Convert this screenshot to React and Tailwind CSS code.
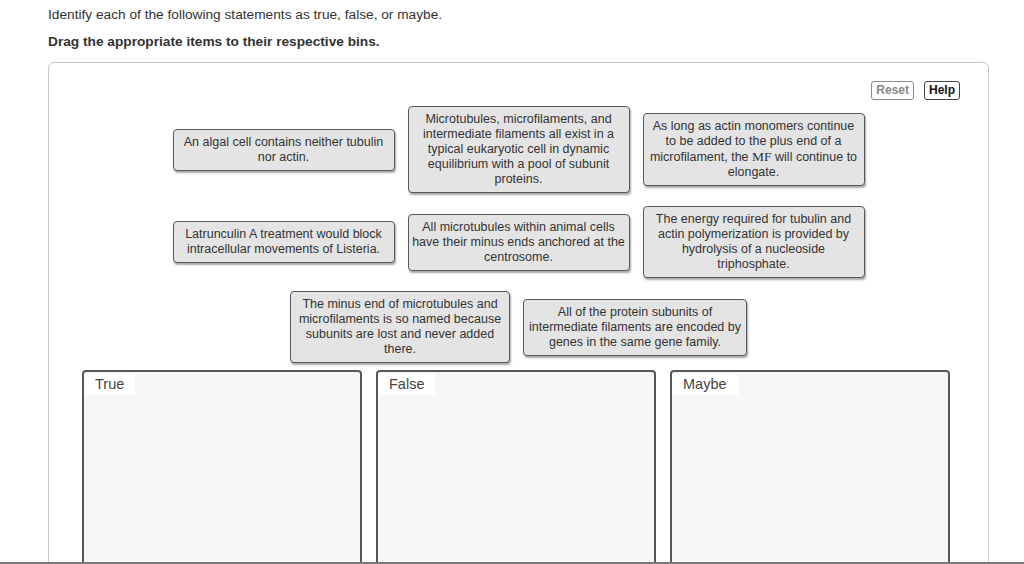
import React from "react";

const rows = [
  [
    { w: "w-[222px]", text: "An algal cell contains neither tubulin nor actin." },
    {
      w: "w-[222px]",
      text: "Microtubules, microfilaments, and intermediate filaments all exist in a typical eukaryotic cell in dynamic equilibrium with a pool of subunit proteins.",
    },
    {
      w: "w-[222px]",
      text: (
        <>
          As long as actin monomers continue to be added to the plus end of a
          microfilament, the{" "}
          <span className="font-['Liberation_Serif',serif] text-[13.5px]">MF</span>{" "}
          will continue to elongate.
        </>
      ),
    },
  ],
  [
    {
      w: "w-[222px]",
      text: "Latrunculin A treatment would block intracellular movements of Listeria.",
    },
    {
      w: "w-[222px]",
      text: "All microtubules within animal cells have their minus ends anchored at the centrosome.",
    },
    {
      w: "w-[222px]",
      text: "The energy required for tubulin and actin polymerization is provided by hydrolysis of a nucleoside triphosphate.",
    },
  ],
  [
    {
      w: "w-[220px]",
      text: "The minus end of microtubules and microfilaments is so named because subunits are lost and never added there.",
    },
    {
      w: "w-[224px]",
      text: "All of the protein subunits of intermediate filaments are encoded by genes in the same gene family.",
    },
  ],
];

const bins = ["True", "False", "Maybe"];

function Card({ w, text }) {
  return (
    <div
      className={`${w} rounded-[4px] border border-[#555a60] bg-[#e4e4e4] px-[3px] py-[5px] text-center text-[12.5px] leading-[15px] text-[#333] shadow-[1px_2px_2px_rgba(0,0,0,0.35)]`}
    >
      {text}
    </div>
  );
}

export default function App() {
  return (
    <div className="relative h-[564px] overflow-hidden bg-white font-['Liberation_Sans',Arial,sans-serif] text-[#333]">
      <div className="h-[562px] overflow-hidden px-[48px] pt-[6px]">
        <p className="text-[13.7px] leading-[18px]">
          Identify each of the following statements as true, false, or maybe.
        </p>
        <p className="mt-[9px] text-[13.7px] font-bold leading-[18px]">
          Drag the appropriate items to their respective bins.
        </p>

        <div className="mt-[11px] w-[941px] rounded-t-[6px] border border-[#c9c9c9] pt-[18px]">
          <div className="flex justify-end gap-[10px] pr-[28px]">
            <button className="h-[19px] rounded-[3px] border border-[#8a8a8a] px-[4px] text-[12px] font-bold leading-[17px] text-[#888]">
              Reset
            </button>
            <button className="h-[19px] rounded-[3px] border border-[#444] px-[4px] text-[12px] font-bold leading-[17px] text-[#111]">
              Help
            </button>
          </div>

          <div className="mt-[6px] flex flex-col gap-[13px]">
            {rows.map((row, i) => (
              <div key={i} className="flex items-center justify-center gap-[13px]">
                {row.map((c, j) => (
                  <Card key={j} {...c} />
                ))}
              </div>
            ))}
          </div>

          <div className="mt-[7px] flex gap-[14px] pl-[33px]">
            {bins.map((b) => (
              <div
                key={b}
                className="h-[220px] w-[280px] rounded-[4px] border-2 border-[#55575e] bg-[#f7f7f7]"
              >
                <span className="inline-block bg-white px-[11px] text-[14.5px] leading-[21px] text-[#444]">
                  {b}
                </span>
              </div>
            ))}
          </div>
        </div>
      </div>
      <div className="h-[2px] bg-[#7a7a7a]" />
    </div>
  );
}
